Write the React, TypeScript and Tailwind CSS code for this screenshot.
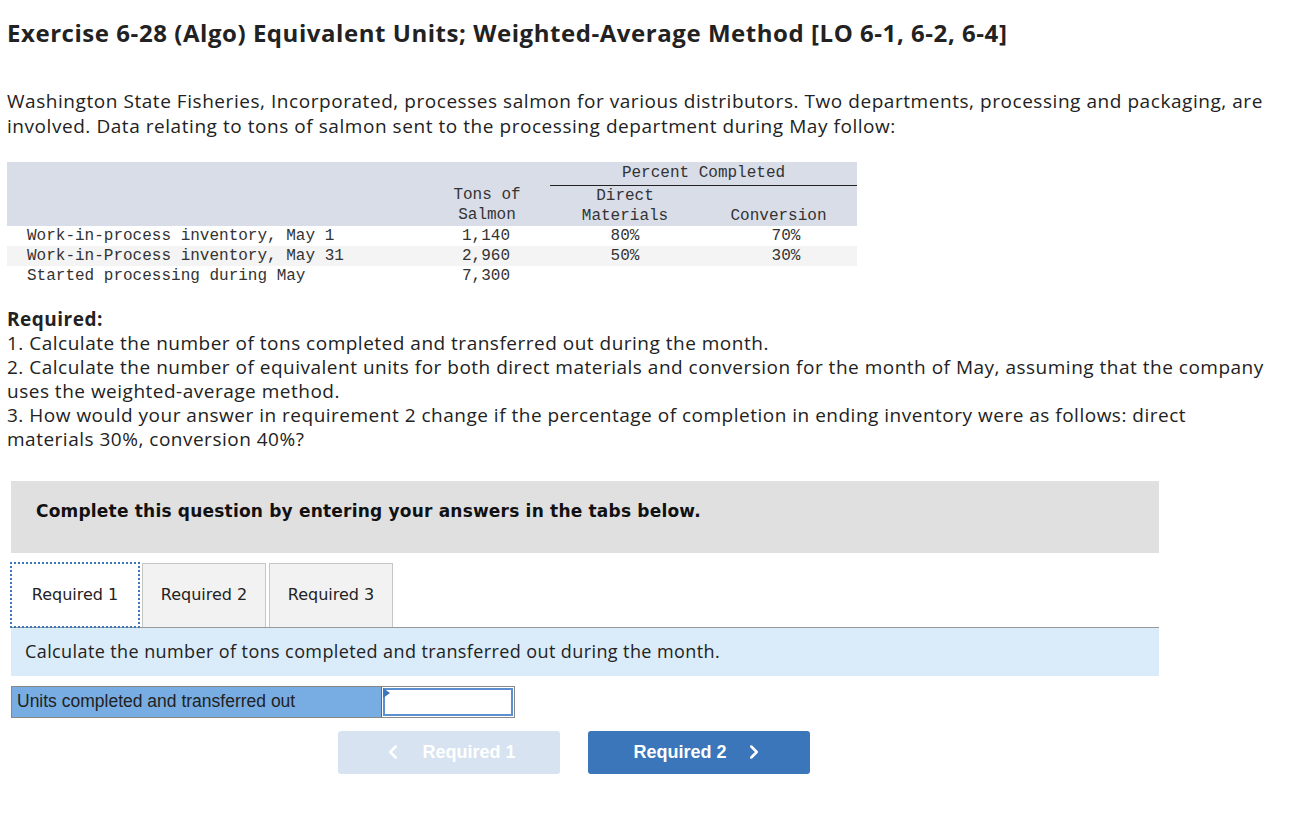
import { ChevronLeft, ChevronRight } from 'lucide-react';

const rows = [
  { label: 'Work-in-process inventory, May 1', tons: '1,140', dm: '80%', conv: '70%', shade: false },
  { label: 'Work-in-Process inventory, May 31', tons: '2,960', dm: '50%', conv: '30%', shade: true },
  { label: 'Started processing during May', tons: '7,300', dm: '', conv: '', shade: false },
];

const sans = "font-['Open_Sans',sans-serif]";
const mono = "font-['Liberation_Mono',monospace]";

export default function App() {
  return (
    <div className={`w-[1289px] min-h-[813px] bg-white text-[#222] ${sans}`}>
      <div className="px-[7px] pt-[18px]">
        <h1 className="text-[24px] font-bold leading-[30px] tracking-[0.55px] text-[#222]">
          Exercise 6-28 (Algo) Equivalent Units; Weighted-Average Method [LO 6-1, 6-2, 6-4]
        </h1>

        <p className="mt-[41px] w-[1275px] text-[19px] leading-[25px] tracking-[0.55px]">
          Washington State Fisheries, Incorporated, processes salmon for various distributors. Two departments, processing and packaging, are involved. Data relating to tons of salmon sent to the processing department during May follow:
        </p>

        <table className={`mt-[23px] w-[850px] border-collapse text-[16px] leading-[20px] text-[#333] ${mono}`}>
          <thead>
            <tr className="bg-[#d8dde8]">
              <th className="w-[423px]"></th>
              <th className="w-[120px]"></th>
              <th colSpan={2} className="h-[23px] border-b border-[#222] p-0 text-center font-normal">
                Percent Completed
              </th>
            </tr>
            <tr className="bg-[#d8dde8]">
              <th></th>
              <th className="pr-[6px] text-center font-normal">Tons of<br />Salmon</th>
              <th className="w-[150px] text-center font-normal">Direct<br />Materials</th>
              <th className="text-center align-bottom font-normal">Conversion</th>
            </tr>
          </thead>
          <tbody>
            {rows.map((r) => (
              <tr key={r.label} className={r.shade ? 'bg-[#f4f4f4]' : ''}>
                <td className="pl-[20px]">{r.label}</td>
                <td className="pr-[8px] text-center">{r.tons}</td>
                <td className="text-center">{r.dm}</td>
                <td className="pl-[15px] text-center">{r.conv}</td>
              </tr>
            ))}
          </tbody>
        </table>

        <div className="mt-[21px] text-[19px] leading-[24px] tracking-[0.5px]">
          <div className="font-bold">Required:</div>
          <div>1. Calculate the number of tons completed and transferred out during the month.</div>
          <div className="w-[1275px]">
            2. Calculate the number of equivalent units for both direct materials and conversion for the month of May, assuming that the company uses the weighted-average method.
          </div>
          <div className="w-[1210px]">
            3. How would your answer in requirement 2 change if the percentage of completion in ending inventory were as follows: direct materials 30%, conversion 40%?
          </div>
        </div>
      </div>

      <div className="ml-[11px] w-[1148px]">
        <div className="mt-[30px] h-[72px] bg-[#e0e0e0] pl-[25px] pt-[18px]">
          <span className="font-['DejaVu_Sans',sans-serif] text-[17px] font-bold tracking-[0.2px] text-[#111]">
            Complete this question by entering your answers in the tabs below.
          </span>
        </div>

        <div className="mt-[10px] flex items-end gap-[3px] border-b border-[#999] font-['DejaVu_Sans',sans-serif] text-[16px] text-[#222]">
          <button className="h-[64px] w-[128px] bg-white outline-2 outline-dotted outline-[#3b77b8] -outline-offset-1">
            Required 1
          </button>
          <button className="h-[64px] w-[124px] border border-b-0 border-[#c6c6c6] bg-[#f2f2f2]">
            Required 2
          </button>
          <button className="h-[64px] w-[124px] border border-b-0 border-[#c6c6c6] bg-[#f2f2f2]">
            Required 3
          </button>
        </div>

        <div className="flex h-[48px] items-center bg-[#daebf9] pl-[14px] text-[18px] tracking-[0.4px]">
          Calculate the number of tons completed and transferred out during the month.
        </div>

        <div className="mt-[10px] flex h-[32px] w-[504px] border border-[#888] font-['Liberation_Sans',Arial,sans-serif] text-[17.5px]">
          <div className="flex w-[369px] items-center bg-[#78ade3] pl-[5px] text-[#222]">
            Units completed and transferred out
          </div>
          <div className="relative flex-1 border-l border-[#666] p-[1px]">
            <div className="h-full w-full border-2 border-[#5b8fd0] bg-white"></div>
            <div className="absolute left-[1px] top-[1px] h-0 w-0 border-y-[5px] border-l-[7px] border-y-transparent border-l-[#3b77b8]"></div>
          </div>
        </div>

        <div className="mt-[13px] flex gap-[28px] pl-[327px] font-['Liberation_Sans',Arial,sans-serif] text-[18px] font-bold text-white">
          <button className="flex h-[43px] w-[222px] items-center justify-center gap-[18px] rounded-[3px] bg-[#d7e3f0]">
            <ChevronLeft size={22} strokeWidth={2.75} />
            <span>Required 1</span>
          </button>
          <button className="flex h-[43px] w-[222px] items-center justify-center gap-[16px] rounded-[3px] bg-[#3a76b9]">
            <span>Required 2</span>
            <ChevronRight size={22} strokeWidth={2.75} />
          </button>
        </div>
      </div>
    </div>
  );
}
